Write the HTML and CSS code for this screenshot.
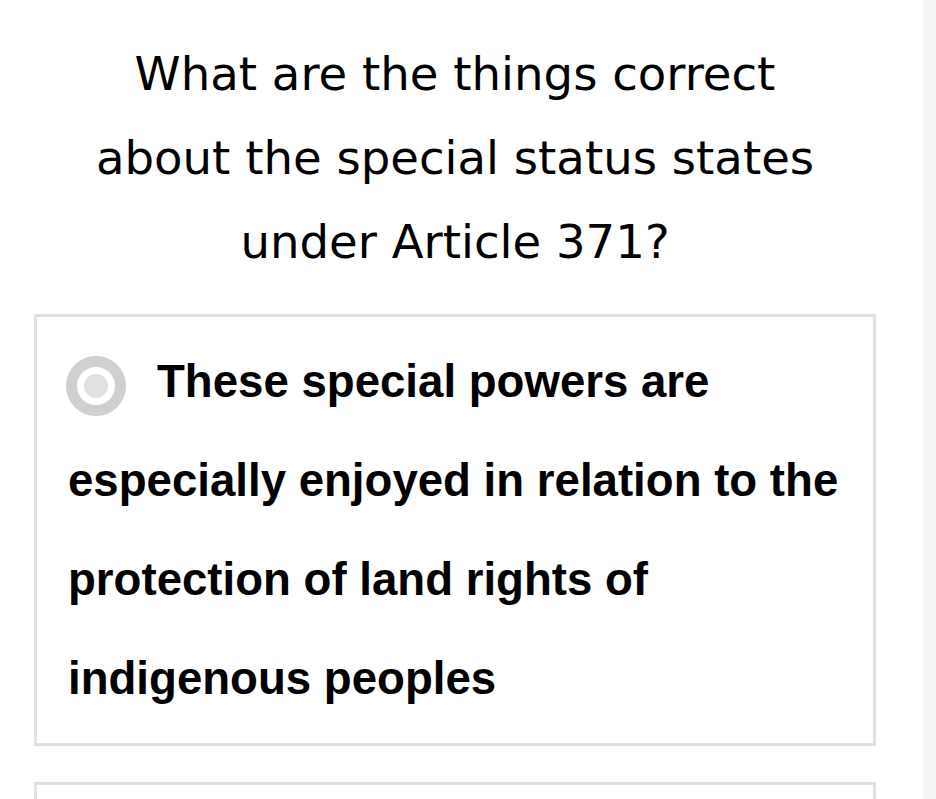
FILE: index.html
```html
<!DOCTYPE html>
<html lang="en">
<head>
<meta charset="utf-8">
<title>Question</title>
<link rel="stylesheet" href="styles.css">
</head>
<body>
<div class="page">
  <main class="quiz">
    <h1 class="question">What are the things correct about the special status states under Article 371?</h1>
    <div class="option">
      <p class="option-text"><span class="radio"></span>These special powers are especially enjoyed in relation to the protection of land rights of indigenous peoples</p>
    </div>
    <div class="option option-next"></div>
  </main>
  <aside class="scroll-strip"></aside>
</div>
</body>
</html>
```

FILE: styles.css
```css
html, body {
  margin: 0;
  padding: 0;
  background: #ffffff;
  height: 100%;
  overflow: hidden;
}
body {
  font-family: "Liberation Sans", Arial, sans-serif;
  color: #000000;
}
.page {
  display: flex;
  height: 799px;
  overflow: hidden;
}
.quiz {
  flex: 1;
  padding: 32px 47px 0 34px;
  display: flex;
  flex-direction: column;
  gap: 36px;
  overflow: hidden;
}
.question {
  margin: 0 0 -6px;
  padding: 0 40px;
  font-family: "DejaVu Sans", sans-serif;
  font-weight: 400;
  font-size: 46.6px;
  line-height: 84px;
  text-align: center;
}
.option {
  border: 3px solid #e0e0e0;
  padding: 15px 24px 15px 31px;
  flex-shrink: 0;
}
.option-next {
  min-height: 40px;
}
.option-text {
  margin: 0;
  font-weight: 700;
  font-size: 45.6px;
  line-height: 99px;
}
.radio {
  display: inline-block;
  box-sizing: border-box;
  width: 60px;
  height: 60px;
  margin-left: -2px;
  border: 11px solid #d0d0d0;
  border-radius: 50%;
  background: radial-gradient(circle, #e0e0e0 0, #e0e0e0 11.5px, #ffffff 12.5px);
  vertical-align: -19px;
  margin-right: 31px;
}
.scroll-strip {
  width: 13px;
  flex-shrink: 0;
  background: #f5f5f5;
}
```
